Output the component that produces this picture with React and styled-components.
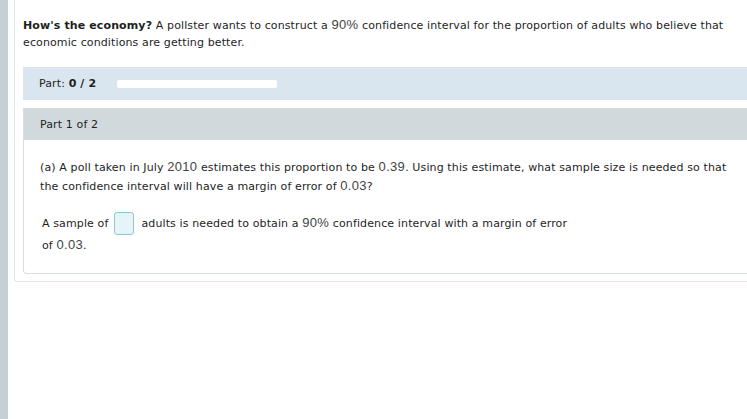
import React from "react";
import styled, { createGlobalStyle } from "styled-components";

const GlobalStyle = createGlobalStyle`
  html, body {
    margin: 0;
    padding: 0;
    background: #ffffff;
    overflow: hidden;
  }
  body {
    font-family: "DejaVu Sans", Verdana, sans-serif;
    font-size: 11px;
    letter-spacing: 0.12px;
    color: #1e1e1e;
  }
`;

const Page = styled.div`
  display: flex;
  height: 419px;
  width: 800px;
`;

const Sidebar = styled.div`
  width: 8px;
  flex-shrink: 0;
  background: #c5d0d6;
`;

const Main = styled.div`
  padding-left: 6px;
  width: 760px;
  flex-shrink: 0;
`;

const Panel = styled.div`
  border-left: 1px solid #dfe5e8;
  border-bottom: 1px solid #dfe5e8;
  border-bottom-left-radius: 4px;
  padding: 17px 0 7px 8px;
`;

const Title = styled.p`
  margin: 0 0 16px 0;
  line-height: 17px;
  width: 725px;
`;

const Bold = styled.b`
  font-weight: bold;
`;

const Num = styled.span`
  font-family: "Liberation Sans", Arial, sans-serif;
  font-size: 13px;
  line-height: 1;
  color: #444444;
  letter-spacing: 0.3px;
`;

const PartBar = styled.div`
  display: flex;
  align-items: center;
  height: 33px;
  padding-left: 16px;
  background: #d9e6ef;
  margin-bottom: 8px;
`;

const PartLabel = styled.span`
  width: 78px;
`;

const Progress = styled.div`
  width: 160px;
  height: 8px;
  border-radius: 2px;
  background: #ffffff;
`;

const Card = styled.div`
  border-left: 1px solid #d7dfe2;
  border-bottom: 1px solid #d7dfe2;
  border-bottom-left-radius: 4px;
`;

const CardHeader = styled.div`
  height: 32px;
  display: flex;
  align-items: center;
  padding-left: 16px;
  background: #d1d9dc;
`;

const CardBody = styled.div`
  padding: 18px 16px 16px 16px;
  width: 700px;
`;

const Question = styled.p`
  margin: 0 0 17px 0;
  line-height: 19px;
`;

const Answer = styled.p`
  margin: 0;
  padding-left: 2px;
  line-height: 22px;
  max-width: 535px;
`;

const Box = styled.span`
  display: inline-block;
  width: 18px;
  height: 21px;
  vertical-align: middle;
  margin: -2px 7px 0 6px;
  border: 1px solid #8ec6d6;
  border-radius: 3px;
  background: #e6f4f8;
`;

export default function App() {
  return (
    <>
      <GlobalStyle />
      <Page>
        <Sidebar />
        <Main>
          <Panel>
            <Title>
              <Bold>How's the economy?</Bold> A pollster wants to construct a{" "}
              <Num>90%</Num> confidence interval for the proportion of adults
              who believe that economic conditions are getting better.
            </Title>
            <PartBar>
              <PartLabel>
                Part: <Bold>0 / 2</Bold>
              </PartLabel>
              <Progress />
            </PartBar>
            <Card>
              <CardHeader>Part 1 of 2</CardHeader>
              <CardBody>
                <Question>
                  (a) A poll taken in July <Num>2010</Num> estimates this
                  proportion to be <Num>0.39</Num>. Using this estimate, what
                  sample size is needed so that the confidence interval will
                  have a margin of error of <Num>0.03</Num>?
                </Question>
                <Answer>
                  A sample of
                  <Box />
                  adults is needed to obtain a <Num>90%</Num> confidence
                  interval with a margin of error of <Num>0.03</Num>.
                </Answer>
              </CardBody>
            </Card>
          </Panel>
        </Main>
      </Page>
    </>
  );
}
